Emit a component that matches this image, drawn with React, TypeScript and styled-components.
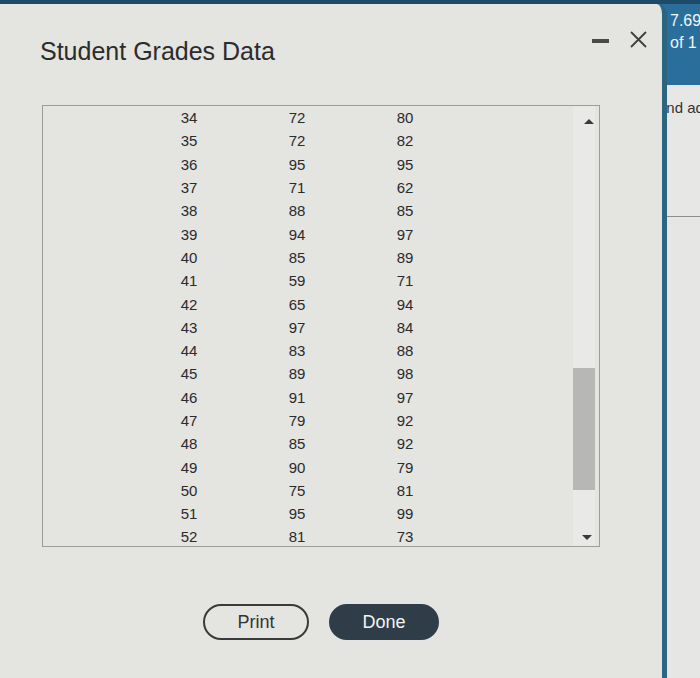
import styled, { createGlobalStyle } from "styled-components";

const GlobalStyle = createGlobalStyle`
  html, body {
    margin: 0;
    padding: 0;
    background: #2a6f9c;
    font-family: "Liberation Sans", Arial, sans-serif;
  }
`;

const Page = styled.div`
  display: flex;
  width: 700px;
  height: 678px;
  overflow: hidden;
  border-top: 4px solid #1d4a68;
  box-sizing: border-box;
`;

const Dialog = styled.div`
  width: 662px;
  flex-shrink: 0;
  background: #e4e4e1;
  border-top-right-radius: 10px;
  border-right: 5px solid #2b6580;
  display: flex;
  flex-direction: column;
`;

const Header = styled.div`
  display: flex;
  justify-content: space-between;
  align-items: flex-start;
  padding: 27px 15px 0 40px;
`;

const Title = styled.h1`
  margin: 5px 0 0;
  font-size: 25px;
  line-height: 30px;
  font-weight: 400;
  color: #2c2c2c;
`;

const Icons = styled.div`
  display: flex;
  align-items: center;
  gap: 21px;
  height: 17px;
`;

const Minus = styled.div`
  width: 17px;
  height: 4px;
  background: #4a4a4a;
  margin-top: 2px;
`;

const Body = styled.div`
  margin: 39px 0 0 42px;
  width: 558px;
  display: flex;
  flex-direction: column;
`;

const TableBox = styled.div`
  height: 442px;
  border: 1px solid #9c9c9a;
  box-sizing: border-box;
  display: flex;
  overflow: hidden;
`;

const Rows = styled.div`
  flex: 1;
  padding-left: 92px;
`;

const Row = styled.div`
  display: grid;
  grid-template-columns: repeat(3, 108px);
  height: 23.3px;
  align-items: center;
`;

const Cell = styled.span`
  text-align: center;
  font-size: 15px;
  line-height: 15px;
  color: #2b2b2b;
`;

const Scrollbar = styled.div`
  width: 22px;
  margin-right: 4px;
  background: #e9e9e7;
  display: flex;
  flex-direction: column;
`;

const Arrow = styled.div<{ $down?: boolean }>`
  height: 24px;
  display: flex;
  justify-content: flex-end;
  align-items: ${(p) => (p.$down ? "flex-end" : "flex-start")};
  padding: ${(p) => (p.$down ? "0 3px 6px 0" : "13px 1px 0 0")};
  box-sizing: border-box;
  &::after {
    content: "";
    border-left: 5px solid transparent;
    border-right: 5px solid transparent;
    ${(p) =>
      p.$down
        ? "border-top: 5px solid #3a3a3a;"
        : "border-bottom: 5px solid #3a3a3a;"}
  }
`;

const Track = styled.div`
  flex: 1;
`;

const Thumb = styled.div`
  margin-top: 238px;
  height: 122px;
  background: #b7b7b5;
`;

const Buttons = styled.div`
  margin-top: 57px;
  display: flex;
  justify-content: center;
  gap: 20px;
`;

const Button = styled.button<{ $primary?: boolean }>`
  width: ${(p) => (p.$primary ? "110px" : "106px")};
  height: 36px;
  border-radius: 18px;
  font-family: "Liberation Sans", Arial, sans-serif;
  font-size: 18px;
  box-sizing: border-box;
  cursor: pointer;
  border: 2px solid ${(p) => (p.$primary ? "#2f3d49" : "#3a3a3a")};
  background: ${(p) => (p.$primary ? "#2f3d49" : "transparent")};
  color: ${(p) => (p.$primary ? "#f4f4f4" : "#333")};
`;

const Side = styled.div`
  flex: 1;
  display: flex;
  flex-direction: column;
  overflow: hidden;
`;

const SideTop = styled.div`
  height: 81px;
  padding: 6px 0 0 3px;
  box-sizing: border-box;
  color: #f2f6f8;
  font-size: 16px;
  line-height: 22px;
  white-space: nowrap;
`;

const SidePanel = styled.div`
  height: 132px;
  background: #e7e7e5;
  border-bottom: 1px solid #8e8e8e;
  padding: 14px 0 0 0;
  box-sizing: border-box;
  font-size: 15px;
  color: #333;
  white-space: nowrap;
  text-indent: -9px;
`;

const SideRest = styled.div`
  flex: 1;
  background: #e6e6e4;
`;

const data: [number, number, number][] = [
  [34, 72, 80],
  [35, 72, 82],
  [36, 95, 95],
  [37, 71, 62],
  [38, 88, 85],
  [39, 94, 97],
  [40, 85, 89],
  [41, 59, 71],
  [42, 65, 94],
  [43, 97, 84],
  [44, 83, 88],
  [45, 89, 98],
  [46, 91, 97],
  [47, 79, 92],
  [48, 85, 92],
  [49, 90, 79],
  [50, 75, 81],
  [51, 95, 99],
  [52, 81, 73],
];

export default function App() {
  return (
    <>
      <GlobalStyle />
      <Page>
        <Dialog>
          <Header>
            <Title>Student Grades Data</Title>
            <Icons>
              <Minus />
              <svg width="17" height="17" viewBox="0 0 17 17">
                <path
                  d="M1 1 L16 16 M16 1 L1 16"
                  stroke="#3f3f3f"
                  strokeWidth="1.8"
                  fill="none"
                />
              </svg>
            </Icons>
          </Header>
          <Body>
            <TableBox>
              <Rows>
                {data.map((row) => (
                  <Row key={row[0]}>
                    {row.map((v, i) => (
                      <Cell key={i}>{v}</Cell>
                    ))}
                  </Row>
                ))}
              </Rows>
              <Scrollbar>
                <Arrow />
                <Track>
                  <Thumb />
                </Track>
                <Arrow $down />
              </Scrollbar>
            </TableBox>
            <Buttons>
              <Button>Print</Button>
              <Button $primary>Done</Button>
            </Buttons>
          </Body>
        </Dialog>
        <Side>
          <SideTop>
            <div>7.69</div>
            <div>of 1</div>
          </SideTop>
          <SidePanel>and ad</SidePanel>
          <SideRest />
        </Side>
      </Page>
    </>
  );
}
